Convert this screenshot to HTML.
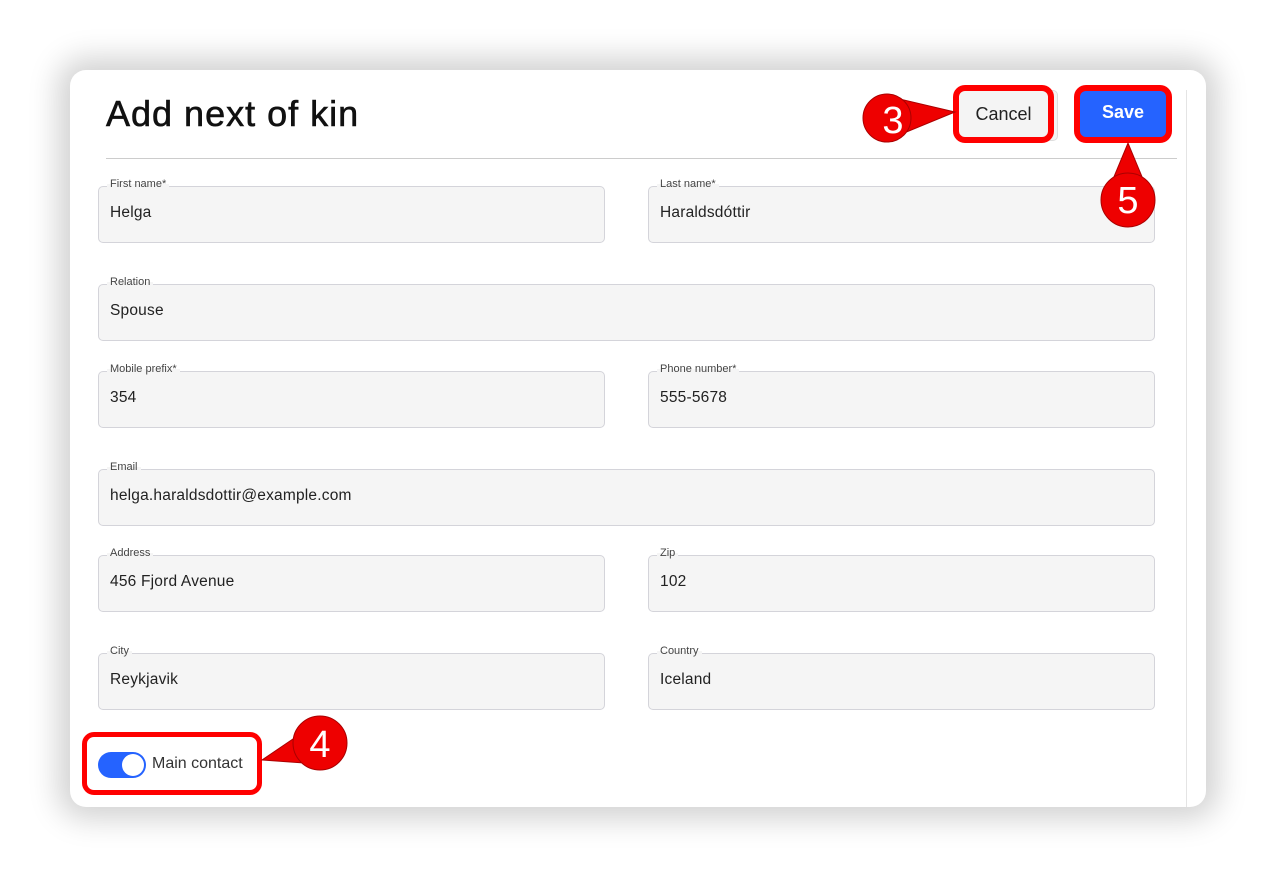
<!DOCTYPE html><html><head><style>
body{margin:0;width:1281px;height:882px;background:#fff;font-family:"Liberation Sans",Arial,sans-serif;position:relative;overflow:hidden}
.card{position:absolute;left:70px;top:70px;width:1136px;height:737px;background:#fff;border-radius:16px;box-shadow:0 0 30px 12px rgba(0,0,0,.18)}
.abs{position:absolute}
.f{position:absolute;height:57px;background:#f5f5f5;border:1px solid #d4d4da;border-radius:5px;box-sizing:border-box}
.f .l{position:absolute;left:8px;top:-9px;font-size:11px;color:#444;background:linear-gradient(#fff 50%,#f5f5f5 50%);padding:0 3px}
.f .v{position:absolute;left:11px;top:17px;font-size:15.5px;color:#222;letter-spacing:0.2px}
.L{left:98px;width:507px}.R{left:648px;width:507px}.W{left:98px;width:1057px}
.red{position:absolute;border:6px solid #f00;border-radius:12px;box-sizing:border-box}
</style></head><body>
<div class="card"></div>
<div class="abs" style="left:1186px;top:90px;width:1px;height:717px;background:#e4e4e4"></div>
<div class="abs" style="left:106px;top:93px;font-size:36px;color:#111;-webkit-text-stroke:0.6px #111;letter-spacing:1px">Add next of kin</div>
<div class="abs" style="left:106px;top:158px;width:1071px;height:1px;background:#ccc"></div>
<div class="abs" style="left:960px;top:90px;width:96px;height:49px;border:1px solid #ddd;border-radius:5px;background:#f4f4f4"></div>
<div class="red" style="left:953px;top:85px;width:101px;height:58px;background:#f4f4f4"></div>
<div class="abs" style="left:953px;top:104px;width:101px;text-align:center;font-size:18px;color:#222">Cancel</div>
<div class="red" style="left:1074px;top:85px;width:98px;height:58px;background:#2563ff"></div>
<div class="abs" style="left:1074px;top:102px;width:98px;text-align:center;font-size:18px;font-weight:bold;color:#fff">Save</div>
<div class="f L" style="top:186px"><span class="l">First name*</span><span class="v">Helga</span></div>
<div class="f R" style="top:186px"><span class="l">Last name*</span><span class="v">Haraldsdóttir</span></div>
<div class="f W" style="top:284px"><span class="l">Relation</span><span class="v">Spouse</span></div>
<div class="f L" style="top:371px"><span class="l">Mobile prefix*</span><span class="v">354</span></div>
<div class="f R" style="top:371px"><span class="l">Phone number*</span><span class="v">555-5678</span></div>
<div class="f W" style="top:469px"><span class="l">Email</span><span class="v">helga.haraldsdottir@example.com</span></div>
<div class="f L" style="top:555px"><span class="l">Address</span><span class="v">456 Fjord Avenue</span></div>
<div class="f R" style="top:555px"><span class="l">Zip</span><span class="v">102</span></div>
<div class="f L" style="top:653px"><span class="l">City</span><span class="v">Reykjavik</span></div>
<div class="f R" style="top:653px"><span class="l">Country</span><span class="v">Iceland</span></div>
<div class="red" style="left:82px;top:732px;width:180px;height:63px;border-width:5px"></div>
<div class="abs" style="left:98px;top:752px;width:48px;height:26px;border-radius:13px;background:#2563ff"></div>
<div class="abs" style="left:122px;top:754px;width:22px;height:22px;border-radius:50%;background:#fff"></div>
<div class="abs" style="left:152px;top:755px;font-size:16px;color:#333">Main contact</div>
<svg class="abs" style="left:0;top:0" width="1281" height="882">
<g fill="#e00" stroke="#a00" stroke-width="1">
<path d="M887 96 L955 112 L887 140 Z"/><circle cx="887" cy="118" r="24"/>
<path d="M1106 196 L1128 143 L1150 196 Z"/><circle cx="1128" cy="200" r="27"/>
<path d="M318 722 L262 760 L318 764 Z"/><circle cx="320" cy="743" r="27"/>
</g>
<g fill="#fff" font-family="Liberation Sans,Arial" font-size="38" text-anchor="middle">
<text x="893" y="133">3</text><text x="1128" y="213">5</text><text x="320" y="757">4</text></g>
</svg>
</body></html>
